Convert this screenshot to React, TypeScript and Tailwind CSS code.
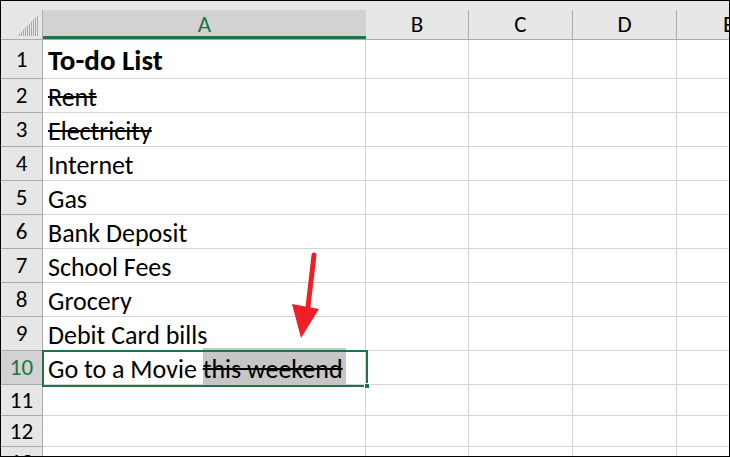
import React from 'react';

const cols = [
  { label: 'A', w: 'w-[323px]' },
  { label: 'B', w: 'w-[103px]' },
  { label: 'C', w: 'w-[104px]' },
  { label: 'D', w: 'w-[104px]' },
  { label: 'E', w: 'w-[104px]' },
];

type Row = { n: number; h: string; text?: React.ReactNode };

const rows: Row[] = [
  { n: 1, h: 'h-[39px]', text: <span className="font-bold text-[29px]">To-do List</span> },
  { n: 2, h: 'h-[34px]', text: <span className="line-through">Rent</span> },
  { n: 3, h: 'h-[34px]', text: <span className="line-through">Electricity</span> },
  { n: 4, h: 'h-[34px]', text: 'Internet' },
  { n: 5, h: 'h-[34px]', text: 'Gas' },
  { n: 6, h: 'h-[34px]', text: 'Bank Deposit' },
  { n: 7, h: 'h-[34px]', text: 'School Fees' },
  { n: 8, h: 'h-[34px]', text: 'Grocery' },
  { n: 9, h: 'h-[34px]', text: 'Debit Card bills' },
  {
    n: 10,
    h: 'h-[34px]',
    text: (
      <>
        Go to a Movie{' '}
        <span className="bg-[#c6c6c6] line-through pt-[5px] pb-0 pr-[3px]">this weekend</span>
      </>
    ),
  },
  { n: 11, h: 'h-[31px]' },
  { n: 12, h: 'h-[31px]' },
  { n: 13, h: 'h-[31px]' },
];

export default function App() {
  return (
    <div className="relative w-[730px] h-[457px] overflow-hidden border border-black bg-white font-['Carlito','Lato',sans-serif] text-black">
      {/* Column headers */}
      <div className="flex h-[39px] bg-[#e6e6e6] border-b border-[#ababab]">
        <div className="relative w-[42px] shrink-0 border-r border-[#ababab] mt-[9px]">
          <svg className="absolute right-[3px] bottom-[3px]" width="22" height="22" viewBox="0 0 22 22">
            <defs>
              <pattern id="hatch" width="2" height="22" patternUnits="userSpaceOnUse">
                <rect width="1" height="22" fill="#a8a8a8" />
              </pattern>
            </defs>
            <polygon points="22,0 22,22 0,22" fill="url(#hatch)" />
          </svg>
        </div>
        {cols.map((c, i) => (
          <div
            key={c.label}
            className={`${c.w} shrink-0 flex items-center justify-center text-[23px] ${
              i === 0
                ? 'bg-[#d2d2d2] text-[#217346] border-b-[3px] border-[#217346] mt-[9px] pt-[2px]'
                : 'border-r border-[#ababab] mt-[9px]'
            }`}
          >
            {c.label}
          </div>
        ))}
      </div>

      {/* Rows */}
      {rows.map((r) => (
        <div key={r.n} className={`flex ${r.h}`}>
          <div
            className={`w-[42px] shrink-0 flex items-center justify-center text-[23px] border-r border-b border-[#ababab] ${
              r.n === 10 ? 'bg-[#d2d2d2] text-[#217346]' : 'bg-[#e6e6e6]'
            }`}
          >
            {r.n}
          </div>
          {cols.map((c, i) => (
            <div
              key={c.label}
              className={`${c.w} shrink-0 border-r border-b border-[#d4d4d4] flex items-center text-[26px] whitespace-nowrap overflow-visible`}
            >
              {i === 0 && r.text ? <span className="pl-[5px] pt-[2px] leading-none">{r.text}</span> : null}
            </div>
          ))}
        </div>
      ))}

      {/* Active cell A10 */}
      <div className="absolute left-[41px] top-[349px] w-[326px] h-[37px] border-2 border-[#217346] pointer-events-none">
        <div className="absolute -right-[4px] -bottom-[4px] w-[6px] h-[6px] bg-[#217346] border border-white" />
      </div>

      {/* Red arrow */}
      <svg className="absolute left-0 top-0 pointer-events-none" width="730" height="457">
        <line x1="313" y1="254" x2="307" y2="306" stroke="#ee2027" strokeWidth="5" strokeLinecap="round" />
        <polygon points="291,303 318,308 300,337" fill="#ee2027" />
      </svg>
    </div>
  );
}
